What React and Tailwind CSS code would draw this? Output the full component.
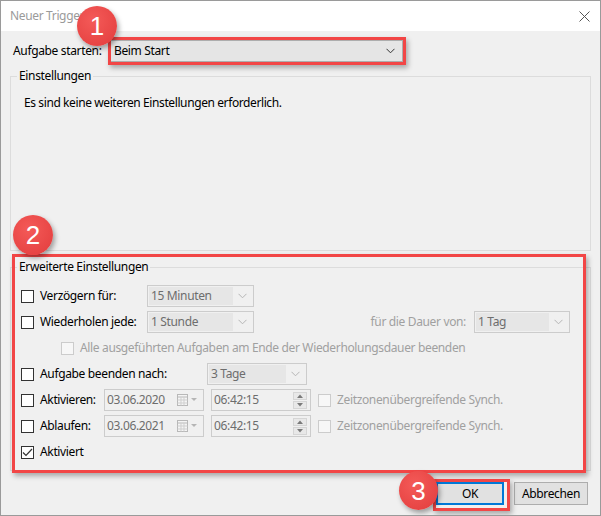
import React from "react";

function Chevron({ color = "#333" }) {
  return (
    <svg width="9" height="6" viewBox="0 0 9 6" className="shrink-0">
      <polyline points="0.5,0.8 4.5,4.8 8.5,0.8" fill="none" stroke={color} strokeWidth="1" />
    </svg>
  );
}

function Check({ checked = false, disabled = false }) {
  return (
    <span
      className={
        disabled
          ? "w-[13px] h-[13px] border border-[#cccccc] bg-[#f7f7f7] shrink-0 flex items-center justify-center"
          : "w-[13px] h-[13px] border border-[#333333] bg-white shrink-0 flex items-center justify-center"
      }
    >
      {checked && (
        <svg width="11" height="11" viewBox="0 0 11 11">
          <polyline points="1,5.5 4,8.5 10,2" fill="none" stroke="#333" strokeWidth="1.2" />
        </svg>
      )}
    </span>
  );
}

function DisCombo({ text, className = "" }) {
  return (
    <div className={"h-[22px] border border-[#cccccc] bg-[#f0f0f0] flex items-center p-[1px] " + className}>
      <div className="h-full flex-1 bg-[#e6e6e6] flex items-center pl-[2px] text-[#6d6d6d]">{text}</div>
      <div className="w-[19px] flex items-center justify-center">
        <Chevron color="#b5b5b5" />
      </div>
    </div>
  );
}

function CalIcon() {
  return (
    <svg width="22" height="12" viewBox="0 0 22 12" className="shrink-0">
      <rect x="0.5" y="0.5" width="10" height="11" fill="#f4f4f4" stroke="#b8b8b8" />
      <line x1="0.5" y1="3" x2="10.5" y2="3" stroke="#b8b8b8" />
      <line x1="0.5" y1="6" x2="10.5" y2="6" stroke="#cfcfcf" />
      <line x1="0.5" y1="9" x2="10.5" y2="9" stroke="#cfcfcf" />
      <line x1="4" y1="3" x2="4" y2="11.5" stroke="#cfcfcf" />
      <line x1="7" y1="3" x2="7" y2="11.5" stroke="#cfcfcf" />
      <polygon points="14,4 20,4 17,7" fill="#b5b5b5" />
    </svg>
  );
}

function DateField({ text }) {
  return (
    <div className="w-[100px] h-[22px] border border-[#cccccc] bg-[#f0f0f0] flex items-center pl-[2px] pr-[4px] justify-between">
      <span className="text-[#6d6d6d]">{text}</span>
      <CalIcon />
    </div>
  );
}

function TimeField() {
  return (
    <div className="w-[100px] h-[22px] border border-[#cccccc] bg-[#f0f0f0] flex items-center pl-[2px] pr-[3px] justify-between">
      <span className="text-[#6d6d6d]">06:42:15</span>
      <div className="flex flex-col gap-[1px]">
        <div className="w-[14px] h-[8px] border border-[#d5d5d5] bg-[#e8e8e8] flex items-center justify-center">
          <svg width="6" height="4" viewBox="0 0 6 4"><polygon points="0,4 6,4 3,0.5" fill="#7a7a7a" /></svg>
        </div>
        <div className="w-[14px] h-[8px] border border-[#d5d5d5] bg-[#e8e8e8] flex items-center justify-center">
          <svg width="6" height="4" viewBox="0 0 6 4"><polygon points="0,0 6,0 3,3.5" fill="#7a7a7a" /></svg>
        </div>
      </div>
    </div>
  );
}

function Badge({ n, className }) {
  return (
    <div
      className={
        "absolute rounded-full bg-[radial-gradient(circle_at_40%_35%,#f45a58,#e23c3c)] shadow-[2px_3px_5px_rgba(0,0,0,0.35)] flex items-center justify-center text-white text-[26px] leading-none tracking-normal font-['Liberation_Sans',Arial,sans-serif] " +
        className
      }
    >
      {n}
    </div>
  );
}

export default function App() {
  return (
    <div className="relative w-[601px] h-[516px] bg-[#f0f0f0] border border-[#9a9a9a] overflow-hidden text-[12px] leading-[16px] tracking-[-0.35px] text-black font-['Noto_Sans',sans-serif]">
      {/* Title bar */}
      <div className="h-[30px] bg-white flex items-center justify-between pl-[9px] pr-[10px]">
        <span className="text-[#9a9a9a]">Neuer Trigger</span>
        <svg width="11" height="11" viewBox="0 0 11 11">
          <line x1="0.5" y1="0.5" x2="10.5" y2="10.5" stroke="#555" strokeWidth="1" />
          <line x1="10.5" y1="0.5" x2="0.5" y2="10.5" stroke="#555" strokeWidth="1" />
        </svg>
      </div>

      <div className="px-[9px]">
        {/* Aufgabe starten */}
        <div className="flex items-center mt-[9px] h-[22px]">
          <span className="ml-[3px] w-[97px]">Aufgabe starten:</span>
          <div className="w-[293px] h-[22px] border border-[#adadad] bg-[#e5e5e5] flex items-center justify-between pl-[3px] pr-[7px]">
            <span>Beim Start</span>
            <Chevron />
          </div>
        </div>

        {/* Einstellungen */}
        <fieldset className="mt-[6px] h-[183px] w-[581px] border border-[#dcdcdc]">
          <legend className="ml-[6px] px-[2px] leading-[16px]">Einstellungen</legend>
          <p className="pl-[13px] mt-[11px] tracking-[-0.4px]">Es sind keine weiteren Einstellungen erforderlich.</p>
        </fieldset>

        {/* Erweiterte Einstellungen */}
        <fieldset className="mt-[8px] h-[212px] w-[581px] border border-[#dcdcdc]">
          <legend className="ml-[6px] px-[2px] leading-[16px]">Erweiterte Einstellungen</legend>
          <div className="pt-[8px] flex flex-col">
            <div className="flex items-center h-[26px] pl-[10px]">
              <Check />
              <span className="ml-[6px] w-[107px]">Verzögern für:</span>
              <DisCombo text="15 Minuten" className="w-[107px]" />
            </div>
            <div className="flex items-center h-[26px] pl-[10px] pr-[20px]">
              <Check />
              <span className="ml-[6px] w-[107px]">Wiederholen jede:</span>
              <DisCombo text="1 Stunde" className="w-[107px]" />
              <span className="ml-auto text-[#a0a0a0]">für die Dauer von:</span>
              <DisCombo text="1 Tag" className="ml-[8px] w-[96px]" />
            </div>
            <div className="flex items-center h-[26px] pl-[50px]">
              <Check disabled />
              <span className="ml-[6px] text-[#a0a0a0]">Alle ausgeführten Aufgaben am Ende der Wiederholungsdauer beenden</span>
            </div>
            <div className="flex items-center h-[26px] pl-[10px]">
              <Check />
              <span className="ml-[6px] w-[167px]">Aufgabe beenden nach:</span>
              <DisCombo text="3 Tage" className="w-[100px]" />
            </div>
            <div className="flex items-center h-[26px] pl-[10px]">
              <Check />
              <span className="ml-[6px] w-[64px]">Aktivieren:</span>
              <DateField text="03.06.2020" />
              <div className="ml-[7px]"><TimeField /></div>
              <div className="ml-[7px]"><Check disabled /></div>
              <span className="ml-[6px] text-[#a0a0a0]">Zeitzonenübergreifende Synch.</span>
            </div>
            <div className="flex items-center h-[26px] pl-[10px]">
              <Check />
              <span className="ml-[6px] w-[64px]">Ablaufen:</span>
              <DateField text="03.06.2021" />
              <div className="ml-[7px]"><TimeField /></div>
              <div className="ml-[7px]"><Check disabled /></div>
              <span className="ml-[6px] text-[#a0a0a0]">Zeitzonenübergreifende Synch.</span>
            </div>
            <div className="flex items-center h-[26px] pl-[10px]">
              <Check checked />
              <span className="ml-[6px]">Aktiviert</span>
            </div>
          </div>
        </fieldset>

        {/* Buttons */}
        <div className="flex justify-end mt-[11px] mr-[3px] gap-[10px]">
          <button className="w-[68px] h-[23px] border-2 border-[#0078d7] bg-[#e1e1e1] flex items-center justify-center">OK</button>
          <button className="w-[74px] h-[23px] border border-[#adadad] bg-[#e1e1e1] flex items-center justify-center">Abbrechen</button>
        </div>
      </div>

      {/* Annotations */}
      <div className="absolute left-[107px] top-[36px] w-[298px] h-[28px] border-[3px] border-[#f24646] shadow-[2px_3px_5px_rgba(0,0,0,0.3)]" />
      <div className="absolute left-[11px] top-[253px] w-[574px] h-[219px] border-[3px] border-[#f24646] shadow-[2px_3px_5px_rgba(0,0,0,0.3)]" />
      <div className="absolute left-[432px] top-[478px] w-[77px] h-[32px] border-[3px] border-[#f24646] shadow-[2px_3px_5px_rgba(0,0,0,0.3)]" />

      <Badge n="1" className="left-[76px] top-[5px] w-[40px] h-[40px]" />
      <Badge n="2" className="left-[12px] top-[214px] w-[40px] h-[40px]" />
      <Badge n="3" className="left-[398px] top-[470px] w-[39px] h-[39px]" />
    </div>
  );
}
